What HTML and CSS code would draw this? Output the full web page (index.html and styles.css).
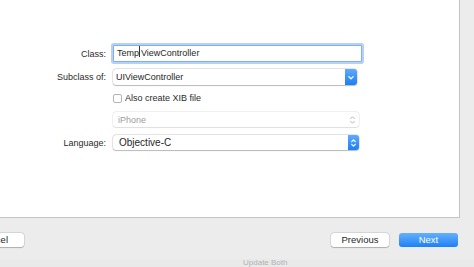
FILE: index.html
```html
<!DOCTYPE html>
<html>
<head>
<meta charset="utf-8">
<link rel="stylesheet" href="styles.css">
</head>
<body>
<div class="sheet">
  <div class="panel">
    <div class="form">
      <div class="row row-class">
        <span class="label">Class:</span>
        <div class="textfield">Temp<span class="ibeam"></span>ViewController</div>
      </div>
      <div class="row row-sub">
        <span class="label">Subclass of:</span>
        <div class="popup popup-sub">
          <span class="ptext">UIViewController</span>
          <span class="arrow arrow-down">
            <svg width="12" height="15" viewBox="0 0 12 15"><path d="M3.8 6.6 L6 8.8 L8.2 6.6" fill="none" stroke="#fff" stroke-width="1.3" stroke-linecap="round" stroke-linejoin="round"/></svg>
          </span>
        </div>
      </div>
      <div class="row row-check">
        <span class="label"></span>
        <label class="check"><span class="box"></span><span class="ctext">Also create XIB file</span></label>
      </div>
      <div class="row row-device">
        <span class="label"></span>
        <div class="popup popup-disabled">
          <span class="ptext">iPhone</span>
          <span class="arrow arrow-gray">
            <svg width="11" height="14" viewBox="0 0 11 14"><path d="M3.7 5.6 L5.5 3.8 L7.3 5.6 M3.7 8.4 L5.5 10.2 L7.3 8.4" fill="none" stroke="#b4b4b4" stroke-width="1" stroke-linecap="round" stroke-linejoin="round"/></svg>
          </span>
        </div>
      </div>
      <div class="row row-lang">
        <span class="label">Language:</span>
        <div class="popup popup-lang">
          <span class="ptext">Objective-C</span>
          <span class="arrow arrow-step">
            <svg width="11" height="14" viewBox="0 0 11 14"><path d="M3.7 5.6 L5.5 3.8 L7.3 5.6 M3.7 8.4 L5.5 10.2 L7.3 8.4" fill="none" stroke="#fff" stroke-width="1.2" stroke-linecap="round" stroke-linejoin="round"/></svg>
          </span>
        </div>
      </div>
    </div>
  </div>
  <div class="footer">
    <button class="btn btn-cancel">Cancel</button>
    <div class="spacer"></div>
    <button class="btn btn-prev">Previous</button>
    <button class="btn btn-next">Next</button>
  </div>
</div>
<div class="below"><span class="ghost">Update Both</span></div>
</body>
</html>
```

FILE: styles.css
```css
html, body {
  margin: 0;
  padding: 0;
}
body {
  width: 474px;
  height: 267px;
  overflow: hidden;
  background: #e4e4e4;
  font-family: "Liberation Sans", Arial, sans-serif;
  font-size: 9px;
  color: #262626;
}
.sheet {
  width: 474px;
  height: 259px;
  background: #ececec;
  display: flex;
  flex-direction: column;
  box-shadow: 0 1px 2px rgba(0,0,0,0.35);
  position: relative;
}
.panel {
  width: 459px;
  height: 217px;
  background: #fff;
  border-right: 1px solid #c4c4c4;
  border-bottom: 1px solid #c4c4c4;
  flex: none;
}
.form {
  padding-top: 45px;
  display: flex;
  flex-direction: column;
}
.row {
  display: flex;
  align-items: center;
}
.label {
  width: 106px;
  text-align: right;
  margin-right: 7px;
  color: #2a2a2a;
  flex: none;
}
.textfield {
  width: 244px;
  height: 15px;
  line-height: 15px;
  border: 1px solid #7fb0ea;
  box-shadow: 0 0 0 2px rgba(120,172,238,0.55);
  border-radius: 1px;
  padding-left: 3px;
  box-sizing: content-box;
  color: #1f1f1f;
  background: #fff;
}
.ibeam {
  display: inline-block;
  position: relative;
  width: 2px;
  height: 1px;
}
.ibeam::after {
  content: "";
  position: absolute;
  left: 0;
  top: -9px;
  width: 1px;
  height: 11px;
  background: #333;
}
.row-sub { margin-top: 7px; }
.row-check { margin-top: 8px; }
.row-device { margin-top: 9px; }
.row-lang { margin-top: 8px; }

.popup {
  display: flex;
  align-items: center;
  height: 15px;
  background: #fff;
  border-radius: 3px;
  box-sizing: border-box;
}
.popup-sub {
  width: 244px;
  height: 16px;
  box-shadow: 0 0 0 0.5px rgba(0,0,0,0.18), 0 0.5px 1px rgba(0,0,0,0.2);
}
.popup-disabled {
  width: 246px;
  height: 15px;
  box-shadow: 0 0 0 0.5px rgba(0,0,0,0.1), 0 0.5px 1px rgba(0,0,0,0.08);
  color: #9d9d9d;
}
.popup-lang {
  width: 246px;
  height: 15px;
  box-shadow: 0 0 0 0.5px rgba(0,0,0,0.18), 0 0.5px 1px rgba(0,0,0,0.2);
  font-size: 10px;
}
.ptext {
  flex: 1;
  padding-left: 3px;
}
.popup-disabled .ptext { padding-left: 5px; }
.popup-lang .ptext { padding-left: 6px; }
.arrow {
  flex: none;
  display: flex;
  align-items: center;
  justify-content: center;
  height: 100%;
}
.arrow-down {
  width: 12px;
  background: linear-gradient(#5fabfa, #1c7ff5);
  border-radius: 0 3px 3px 0;
}
.arrow-step {
  width: 11px;
  background: linear-gradient(#5fabfa, #1c7ff5);
  border-radius: 0 3px 3px 0;
}
.arrow-gray {
  width: 11px;
  margin-right: 1px;
}
.check {
  display: flex;
  align-items: center;
}
.box {
  width: 9px;
  height: 9px;
  border: 1px solid #b4b4b4;
  border-radius: 2px;
  background: #fff;
  box-sizing: border-box;
  margin-right: 3px;
}
.ctext { color: #2a2a2a; }

.footer {
  flex: 1;
  display: flex;
  align-items: flex-start;
  padding-top: 15px;
  padding-right: 16px;
}
.spacer { flex: 1; }
.btn {
  height: 14px;
  border: none;
  border-radius: 3px;
  font-family: "Liberation Sans", Arial, sans-serif;
  font-size: 9.5px;
  padding: 0;
  line-height: 14px;
  text-align: center;
}
.btn-cancel {
  width: 58px;
  margin-left: -34px;
  background: #fff;
  color: #262626;
  box-shadow: 0 0 0 0.5px rgba(0,0,0,0.15), 0 0.5px 1px rgba(0,0,0,0.2);
  text-align: right;
  padding-right: 16px;
}
.btn-prev {
  width: 58px;
  background: #fff;
  color: #262626;
  box-shadow: 0 0 0 0.5px rgba(0,0,0,0.15), 0 0.5px 1px rgba(0,0,0,0.2);
  margin-right: 10px;
}
.btn-next {
  width: 59px;
  background: linear-gradient(#66b0fb, #1d80f6);
  color: #fff;
}
.below {
  height: 8px;
  background: #e9e9e9;
  position: relative;
  overflow: hidden;
}
.ghost {
  position: absolute;
  left: 243px;
  top: 0px;
  font-size: 8px;
  color: #9a9a9a;
  opacity: 0.7;
  line-height: 8px;
}
```
